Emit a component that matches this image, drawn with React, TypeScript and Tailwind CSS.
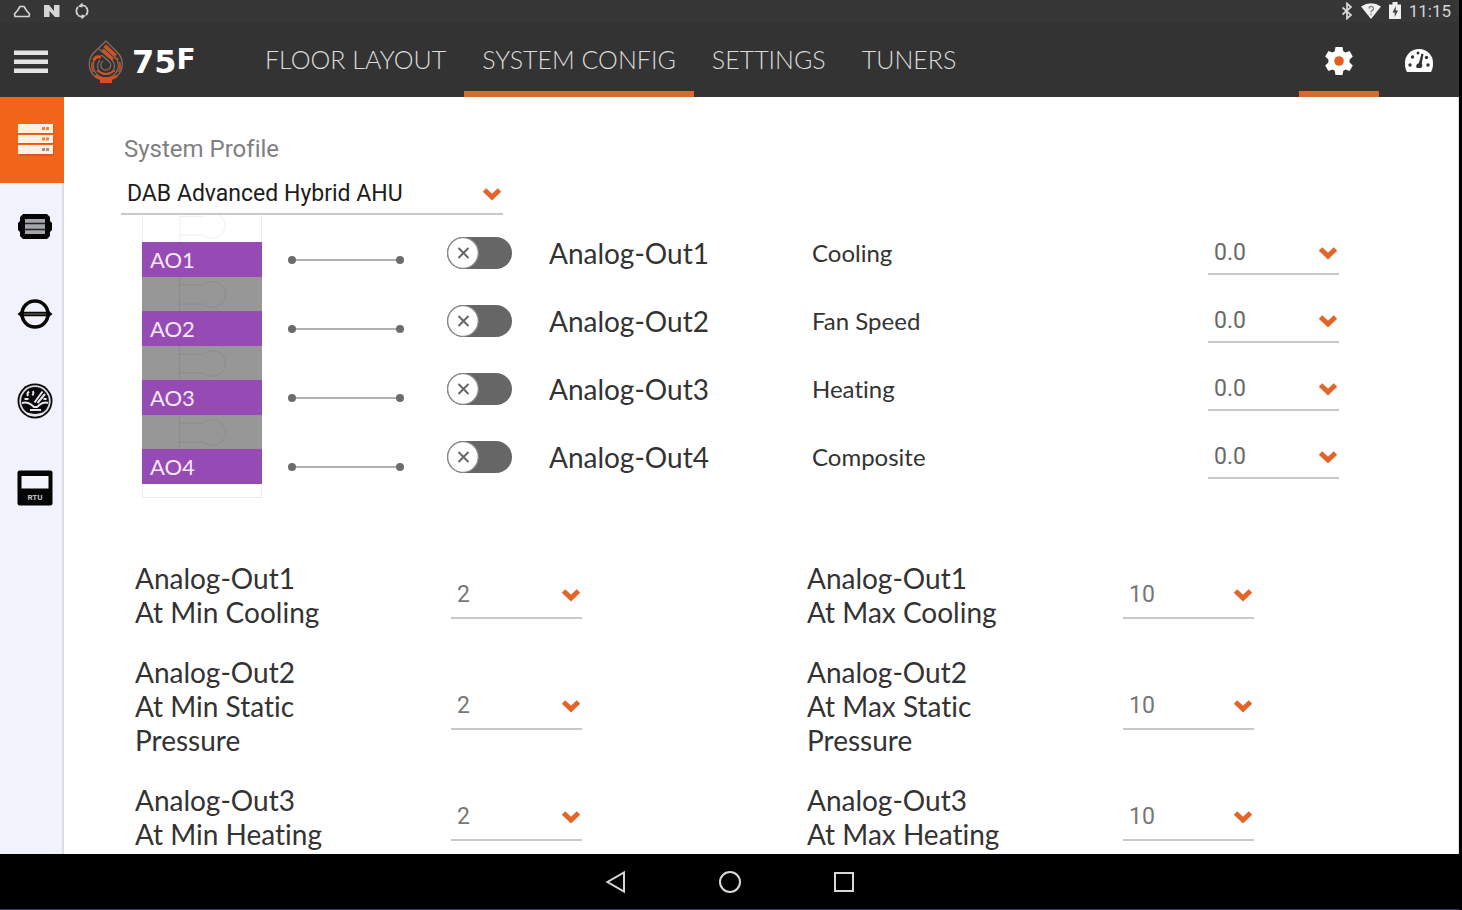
import React, { useState } from 'react';

const TABS = ['FLOOR LAYOUT', 'SYSTEM CONFIG', 'SETTINGS', 'TUNERS'];

const OUTPUTS = [
  { id: 1, label: 'Analog-Out1', role: 'Cooling' },
  { id: 2, label: 'Analog-Out2', role: 'Fan Speed' },
  { id: 3, label: 'Analog-Out3', role: 'Heating' },
  { id: 4, label: 'Analog-Out4', role: 'Composite' },
];

const LIMITS = [
  { id: 'min1', title: 'Analog-Out1', text: 'At Min Cooling', value: '2' },
  { id: 'max1', title: 'Analog-Out1', text: 'At Max Cooling', value: '10' },
  { id: 'min2', title: 'Analog-Out2', text: 'At Min Static Pressure', value: '2' },
  { id: 'max2', title: 'Analog-Out2', text: 'At Max Static Pressure', value: '10' },
  { id: 'min3', title: 'Analog-Out3', text: 'At Min Heating', value: '2' },
  { id: 'max3', title: 'Analog-Out3', text: 'At Max Heating', value: '10' },
];

const VOLTAGES = ['0', '1', '2', '3', '4', '5', '6', '7', '8', '9', '10'];

interface DropdownProps {
  id: string;
  options: string[];
  initial: string;
  className: string;
}

function Dropdown({ id, options, initial, className }: DropdownProps) {
  const [value, setValue] = useState(initial);
  return (
    <div className="relative shrink-0">
      <select
        id={id}
        value={value}
        onChange={(e) => setValue(e.target.value)}
        className={`block appearance-none bg-transparent border-b-2 border-[#c8c8c8] pt-0.5 pl-1.5 pr-10 font-[Roboto,sans-serif] text-[23px] outline-none ${className}`}
      >
        {options.map((o) => (
          <option key={o}>{o}</option>
        ))}
      </select>
      <svg
        viewBox="0 0 20 14"
        className="absolute right-px top-1/2 -translate-y-1/2 w-5 h-3.5 pointer-events-none"
        fill="none"
        stroke="#e2652a"
        strokeWidth="5"
      >
        <path d="M2.500 3 10 10l7.500-7" />
      </svg>
    </div>
  );
}

function Toggle({ id }: { id: string }) {
  const [on, setOn] = useState(false);
  return (
    <div className="relative shrink-0 w-[65px] h-8">
      <input
        id={id}
        type="checkbox"
        checked={on}
        onChange={() => setOn(!on)}
        className="block appearance-none w-full h-full rounded-full bg-[#666666] checked:bg-[#e2652a]"
      />
      <svg
        viewBox="0 0 32 32"
        className={`absolute top-0 w-8 h-8 pointer-events-none ${on ? 'right-0' : 'left-0'}`}
      >
        <circle cx="16" cy="16" r="15.300" fill="#fff" stroke="#8a8a8a" strokeWidth="1.200" />
        <path d="M11.500 11 21.500 21M21.500 11 11.500 21" stroke="#666" strokeWidth="2" />
      </svg>
    </div>
  );
}

// Faint outline of a screw terminal on the board
function Keyhole({ className }: { className: string }) {
  return (
    <svg viewBox="0 0 120 34" preserveAspectRatio="xMidYMax slice" className={className} fill="none" stroke="#000" strokeOpacity="0.07">
      <path d="M37.500 0v34M37.500 8h24a13 13 0 1 1 0 19h-24" />
    </svg>
  );
}

function StatusBar() {
  return (
    <div className="flex items-center h-[22px] pl-[13px] pr-2 bg-[#363636] text-[#d5d5d5]">
      <div className="flex items-center gap-3">
        <svg viewBox="0 0 18 16" className="w-[18px] h-4" fill="none" stroke="currentColor" strokeWidth="1.600">
          <path d="M2 13.500 1.500 11l3-3.500L7 3.500h4l2.500 4 3 3.500-.5 2.500z" strokeLinejoin="round" />
        </svg>
        <svg viewBox="0 0 18 16" className="w-[18px] h-4" fill="currentColor">
          <path d="M1 14V2h5l5 6V2h5.500v12H12L6.500 8v6z" />
        </svg>
        <svg viewBox="0 0 18 18" className="w-[18px] h-[18px]" fill="none" stroke="currentColor" strokeWidth="1.800">
          <path d="M5 13a5.700 5.700 0 0 1 0-8M13 5a5.700 5.700 0 0 1 0 8" />
          <path d="M5 4.500 9.500.5v5zM13 13.500l-4.500 4v-5z" fill="currentColor" stroke="none" />
          <path d="M9 3l4 1.500M9 15l-4-1.500" strokeWidth="1.500" />
        </svg>
      </div>
      <div className="flex items-center gap-2 ml-auto">
        <svg viewBox="0 0 12 18" className="w-3 h-[18px]" fill="none" stroke="currentColor" strokeWidth="1.800">
          <path d="M1.500 5.500 10 13l-4 3.500v-15L10 5l-8.500 7.500" />
        </svg>
        <svg viewBox="0 0 20 16" className="w-5 h-4">
          <path d="M0 3.500Q10-3 20 3.500L10 16z" fill="#f0f0f0" />
          <path d="M8 5.500a2.200 2.200 0 1 1 3.200 2q-1.200.7-1.200 2M10 10.800v1.500" fill="none" stroke="#777" strokeWidth="1.300" />
        </svg>
        <svg viewBox="0 0 12 18" className="w-3 h-[18px]">
          <path d="M0 2.500h3.500V0h5v2.500H12V17H0z" fill="#f0f0f0" />
          <path d="M6.800 4 3.500 10.500h2.200V15L9 8.500H6.800z" fill="#444" />
        </svg>
        <span className="font-[Roboto,sans-serif] text-[17px] leading-5">11:15</span>
      </div>
    </div>
  );
}

function Logo() {
  return (
    <a href="#home" aria-label="75F home" className="flex items-center gap-2 ml-10 pt-1 w-[159px] shrink-0 text-white">
      <svg viewBox="0 0 36 44" className="w-9 h-11 shrink-0" fill="none">
        <g stroke="#8f6d60" strokeWidth="1.200">
          <path d="M18 1 5.500 13A16.500 16.500 0 1 0 30 13z" />
          <path d="M8.500 17a12.500 12.500 0 1 0 18.500 0L16 7" />
          <path d="M12 20a8.500 8.500 0 1 0 12 0L11 9" />
          <path d="M15 21a5 5 0 1 0 5.500 0l-7-6" />
        </g>
        <g stroke="#d9501c" strokeWidth="3">
          <path d="M17 5.500 28 15.500M14.500 9.500 25 19" />
          <path d="M5.500 20.500q2-5 7.500-3.500" />
          <path d="M12 41.500h12M7 36q11 6 22 0" />
          <path d="M9 30.500q9 6.500 18 0" strokeWidth="1.600" />
        </g>
        <path d="M4.500 22q-1.500 6 1 10M31.500 22q1.500 6-1 10M26.500 18.500l4 .5" stroke="#b5491f" strokeWidth="2" />
      </svg>
      <span className="flex items-start font-['DejaVu_Sans',sans-serif] font-bold leading-8">
        <span className="text-[32px]">75</span>
        <span className="text-[28px] leading-7">F</span>
      </span>
    </a>
  );
}

function TopBar() {
  return (
    <header className="bg-[#333333] shrink-0">
      <StatusBar />
      <div className="flex h-[75px] pl-3.5">
        <button type="button" aria-label="Menu" className="shrink-0 pt-1">
          <svg viewBox="0 0 34 24" className="w-[34px] h-6" fill="#e4e4e4">
            <path d="M0 0.500h34v4.500H0zM0 9.500h34V14H0zM0 18.500h34V23H0z" />
          </svg>
        </button>
        <Logo />
        <nav className="flex">
          {TABS.map((tab) => (
            <a
              key={tab}
              href="#tab"
              className={`flex items-center px-[18px] pt-1.5 border-b-6 whitespace-nowrap font-[Lato,sans-serif] font-light text-[25px] text-[#dcdcdc] ${
                tab === 'SYSTEM CONFIG' ? 'border-[#dc6a30]' : 'border-transparent'
              }`}
            >
              {tab}
            </a>
          ))}
        </nav>
        <div className="flex ml-auto">
          <button type="button" aria-label="Configuration" className="flex items-center justify-center w-20 pt-2 border-b-6 border-[#dc6a30]">
            <svg viewBox="0 0 28 28" className="w-7 h-7">
              <path
                d="M10.500 0h7l.8 4.200 2.300 1.300 4-1.500 3.200 5.600-3.200 2.800v3.200l3.200 2.800-3.200 5.600-4-1.500-2.300 1.300-.8 4.200h-7L9.700 23.800l-2.300-1.300-4 1.500L.2 18.400l3.200-2.800v-3.200L.2 9.600 3.400 4l4 1.500L9.700 4.200z"
                fill="#fff"
              />
              <circle cx="14" cy="14" r="4.800" fill="#e2601f" />
            </svg>
          </button>
          <button type="button" aria-label="Dashboard" className="flex items-center justify-center w-20 pt-1.5 border-b-6 border-transparent">
            <svg viewBox="0 0 28 24" className="w-7 h-6">
              <path d="M2 24Q0 21 0 15A14 14 0 0 1 28 15Q28 21 26 24z" fill="#fff" />
              <g fill="#333">
                <circle cx="5" cy="17" r="1.700" />
                <circle cx="7.500" cy="9" r="1.700" />
                <circle cx="13" cy="5" r="1.500" />
                <circle cx="21.500" cy="9.500" r="1.700" />
                <circle cx="23" cy="17" r="1.700" />
                <path d="M16.500 5.500l2 .6-1.700 9.500a3 3 0 0 1-1 4.400h-4a3 3 0 0 1 2-4.800z" />
              </g>
            </svg>
          </button>
        </div>
      </div>
    </header>
  );
}

function SideBar() {
  const item = 'flex items-center justify-center h-[86px] pl-2';
  return (
    <aside className="flex flex-col gap-px w-16 shrink-0 bg-[#f1f2fb] border-r-2 border-[#dcdde4]">
      <button type="button" aria-label="System" className={`${item} -mr-0.5 bg-[#f26419]`}>
        <svg viewBox="0 0 36 32" className="w-9 h-8">
          <path d="M1 1h35v9H1zM1 12h35v8H1zM1 22h35v10H1z" fill="#b9572a" fillOpacity="0.6" />
          <path d="M0 0h35v9H0zM0 11h35v8H0zM0 21h35v9H0z" fill="#fff0e4" />
          <path d="M24 3h3v3h-3zM28 3h3v3h-3zM24 13.500h3v3h-3zM28 13.500h3v3h-3z" fill="#f0813c" />
          <path d="M24 24h3v3h-3zM28 24h3v3h-3z" fill="#b08a80" />
        </svg>
      </button>
      <button type="button" aria-label="Equipment" className={item}>
        <svg viewBox="0 0 36 26" className="w-9 h-[26px] shrink-0">
          <path d="M6 0h24l3 3v4l2 2v7l-2 2v4l-3 3H6l-3-3v-4l-2-2V9l2-2V3z" fill="#050505" />
          <path d="M8 5h20v15H8z" fill="#a3a5a8" />
          <path d="M8 9.500h20M8 15.500h20" stroke="#222" strokeWidth="1.500" />
        </svg>
      </button>
      <button type="button" aria-label="Damper" className={item}>
        <svg viewBox="0 0 36 30" className="w-9 h-[30px] shrink-0" fill="none" stroke="#080808">
          <circle cx="18" cy="15" r="13" strokeWidth="3.500" />
          <path d="M3 15h30" strokeWidth="4.500" />
          <path d="M0.500 15l6-5v10zM35.500 15l-6-5v10z" fill="#080808" stroke="none" />
          <path d="M7 15h22" stroke="#777" strokeWidth="1" />
        </svg>
      </button>
      <button type="button" aria-label="Gauge" className={item}>
        <svg viewBox="0 0 36 36" className="w-9 h-9 shrink-0" fill="none">
          <circle cx="18" cy="18" r="17.500" fill="#0a0a0a" />
          <circle cx="18" cy="18" r="14.800" stroke="#d9dae2" strokeWidth="1.800" />
          <g stroke="#e6e7ee" strokeWidth="2">
            <path d="M5 20q5-1.500 9 1.500l3 2.500h3l3-2.500q4-3 8-1.500" />
            <path d="M17.500 19.500 25.500 8.500M20.500 20l7.500-9" />
            <path d="M12 8.500q-2.500 2-1 4.500M16 8q1 2-.5 4.500M7.500 16h4M26.500 16h3" />
            <path d="M13 27h11M10 30.500q8 3 16 0" />
          </g>
        </svg>
      </button>
      <button type="button" aria-label="RTU" className={item}>
        <svg viewBox="0 0 36 36" className="w-9 h-9 shrink-0">
          <rect x="0.500" y="0.500" width="35" height="35" rx="2" fill="#050505" />
          <path d="M4.500 6h27v12.500h-27z" fill="#f4f5fc" />
          <text x="18" y="30" textAnchor="middle" fontSize="8" fontWeight="700" fontFamily="Roboto, sans-serif" fill="#c8c8c8">
            RTU
          </text>
        </svg>
      </button>
    </aside>
  );
}

function TerminalBoard() {
  return (
    <div className="w-[262px] shrink-0">
      <Keyhole className="block w-[120px] h-[27px] border-x border-[#ececec]" />
      {OUTPUTS.map((o, i) => (
        <React.Fragment key={o.id}>
          <div className="flex items-center h-[35px] gap-[26px]">
            <div className="w-[120px] h-full pl-2 bg-[#964ab4] font-[Lato,sans-serif] text-[22px] leading-[35px] text-[#f6e9fa]">
              AO{o.id}
            </div>
            <svg viewBox="0 0 116 10" className="w-[116px] h-2.5" fill="#6c6c6c">
              <path d="M4 5h108" stroke="#b0b0b0" strokeWidth="2" />
              <circle cx="4" cy="5" r="4" />
              <circle cx="112" cy="5" r="4" />
            </svg>
          </div>
          {i < OUTPUTS.length - 1 && <Keyhole className="block w-[120px] h-[34px] bg-[#979797]" />}
        </React.Fragment>
      ))}
      <div className="w-[120px] h-3.5 border border-t-0 border-[#ececec]" />
    </div>
  );
}

export default function App() {
  return (
    <div className="flex flex-col h-screen overflow-hidden bg-white border-r-3 border-black text-[#333333]">
      <TopBar />
      <div className="flex flex-1 min-h-0">
        <SideBar />
        <main className="flex-1 min-w-0 overflow-hidden pt-9 font-[Lato,sans-serif] [font-variant-ligatures:none] border-r border-[#e0e0e0]">
          <div className="pl-[57px]">
            <label htmlFor="profile" className="block pl-[3px] font-[Roboto,sans-serif] text-2xl leading-8 text-[#808080]">
              System Profile
            </label>
            <div className="flex mt-2">
              <Dropdown
                id="profile"
                options={['DAB Advanced Hybrid AHU', 'DAB Staged RTU', 'Default']}
                initial="DAB Advanced Hybrid AHU"
                className="w-[382px] h-[42px] text-[#1c1c1c]"
              />
            </div>
          </div>

          {/* Analog outputs */}
          <section className="flex pl-[78px] pr-[119px]">
            <TerminalBoard />
            <div className="flex-1 pt-1 pl-[43px]">
              {OUTPUTS.map((o) => (
                <div key={o.id} className="flex items-center h-[68px]">
                  <Toggle id={`out-${o.id}`} />
                  <label htmlFor={`out-${o.id}`} className="w-[263px] ml-[37px] text-[28px]">
                    {o.label}
                  </label>
                  <label htmlFor={`test-${o.id}`} className="flex-1 text-2xl">
                    {o.role}
                  </label>
                  <Dropdown
                    id={`test-${o.id}`}
                    options={['0.0', '50.0', '100.0']}
                    initial="0.0"
                    className="w-[131px] h-11 text-[#6a6a6a]"
                  />
                </div>
              ))}
            </div>
          </section>

          {/* Voltage limits */}
          <section className="grid grid-cols-[672fr_651fr] gap-y-[26px] mt-[63px] pl-[71px]">
            {LIMITS.map((l) => (
              <div key={l.id} className="flex items-center">
                <label htmlFor={l.id} className="w-[210px] mr-[106px] text-[28px] leading-[34px]">
                  <span className="block">{l.title}</span>
                  {l.text}
                </label>
                <Dropdown id={l.id} options={VOLTAGES} initial={l.value} className="w-[131px] h-12 text-[#777777]" />
              </div>
            ))}
          </section>
        </main>
      </div>

      <footer className="flex items-center justify-center gap-[90px] h-14 shrink-0 bg-black border-b border-[#2f3673]">
        <button type="button" aria-label="Back">
          <svg viewBox="0 0 24 24" className="w-6 h-6" fill="none" stroke="#d8d8d8" strokeWidth="2">
            <path d="M20 2.500v19L3.500 12z" />
          </svg>
        </button>
        <button type="button" aria-label="Home">
          <svg viewBox="0 0 24 24" className="w-6 h-6" fill="none" stroke="#d8d8d8" strokeWidth="2">
            <circle cx="12" cy="12" r="10" />
          </svg>
        </button>
        <button type="button" aria-label="Recent apps">
          <svg viewBox="0 0 24 24" className="w-6 h-6" fill="none" stroke="#d8d8d8" strokeWidth="2">
            <path d="M3 3h18v18H3z" />
          </svg>
        </button>
      </footer>
    </div>
  );
}
